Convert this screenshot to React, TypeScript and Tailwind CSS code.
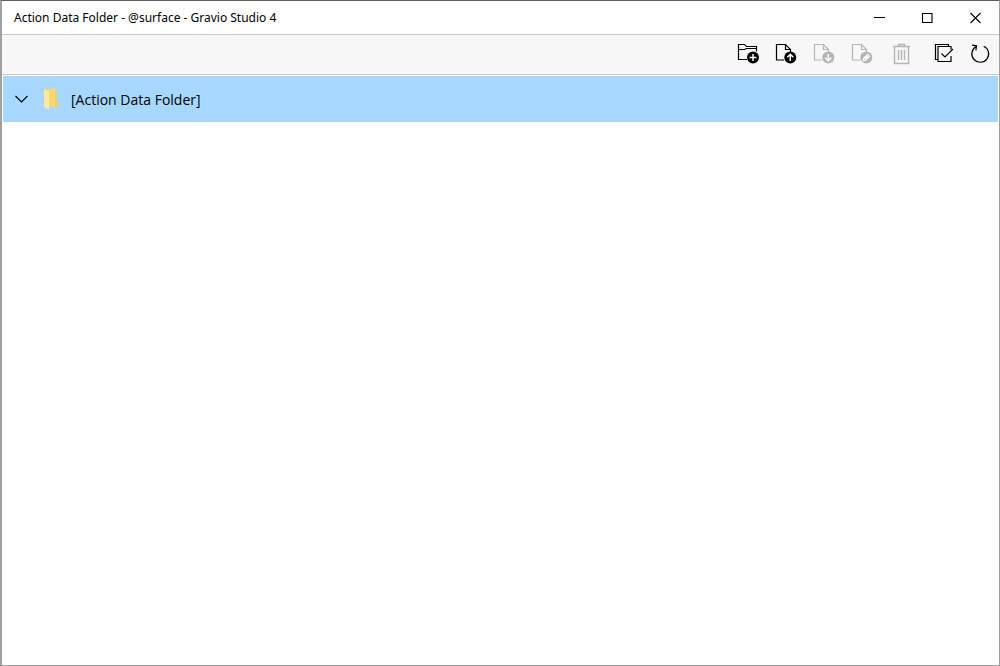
import type { ReactNode } from 'react';

function Icon({ children }: { children: ReactNode }) {
  return (
    <svg viewBox="0 0 24 24" className="block size-6" fill="none" stroke="currentColor" strokeWidth="1.2" aria-hidden="true">
      {children}
    </svg>
  );
}

function ToolButton({ label, disabled = false, children }: { label: string; disabled?: boolean; children: ReactNode }) {
  return (
    <button type="button" aria-label={label} disabled={disabled} className="text-black disabled:text-[#b5b5b5]">
      <Icon>{children}</Icon>
    </button>
  );
}

function DocumentShape() {
  return (
    <>
      <path d="M9 18H1.5V2.5h9L15.5 7.5V10" />
      <path d="M10.5 2.5v5h5" />
      <circle cx="15.3" cy="15.5" r="6" fill="currentColor" stroke="none" />
    </>
  );
}

function CaptionButton({ label, children }: { label: string; children: ReactNode }) {
  return (
    <button type="button" aria-label={label} className="flex w-12 items-center justify-center text-black">
      <svg viewBox="0 0 12 12" className="size-3" fill="none" stroke="currentColor" aria-hidden="true">
        {children}
      </svg>
    </button>
  );
}

export default function App() {
  return (
    <div className="flex min-h-screen flex-col border-t border-r border-b border-l-2 border-t-[#606060] border-r-[#a0a0a0] border-b-[#a0a0a0] border-l-[#a0a0a0] bg-white font-['Open_Sans','Noto_Sans',sans-serif] text-black">
      <header className="flex h-[34px] justify-between border-b border-[#c8c8c8] pl-3">
        <h1 className="self-center font-['Noto_Sans',sans-serif] text-[12px] leading-4">
          Action Data Folder - @surface - Gravio Studio 4
        </h1>
        <div className="flex">
          <CaptionButton label="Minimize">
            <path d="M1 5.5h11" />
          </CaptionButton>
          <CaptionButton label="Maximize">
            <path d="M1.500 1.500h9.500v9h-9.500z" strokeWidth="1.1" />
          </CaptionButton>
          <CaptionButton label="Close">
            <path d="M1.500 1l10 10M11.500 1l-10 10" strokeWidth="1.1" />
          </CaptionButton>
        </div>
      </header>

      <div role="toolbar" aria-label="Folder actions" className="flex h-10 justify-end border-b border-[#c8c8c8] bg-[#f7f7f7] pt-[7px] pr-[7px] pb-2">
        <div className="flex gap-3.5">
          <ToolButton label="New folder">
            <path d="M10 17.500H1.500v-15h6l2 2h10v5" />
            <path d="M1.500 7.500h6l2-1h10" />
            <circle cx="16" cy="15.500" r="6" fill="currentColor" stroke="none" />
            <path d="M16 12v7M12.500 15.500h7" stroke="#fff" strokeWidth="1.5" />
          </ToolButton>
          <ToolButton label="Upload file">
            <DocumentShape />
            <path d="M15.300 19v-6.500M12.300 15.300l3-3 3 3" stroke="#fff" strokeWidth="1.5" />
          </ToolButton>
          <ToolButton label="Download file" disabled>
            <DocumentShape />
            <path d="M15.300 12v6.500M12.300 15.700l3 3 3-3" stroke="#fff" strokeWidth="1.5" />
          </ToolButton>
          <ToolButton label="Edit file" disabled>
            <DocumentShape />
            <path d="M12.200 18.600l.5-2.400 4-3.800 1.800 1.800-4 3.900zM13.800 16.800l2.700-2.600" stroke="#fff" />
          </ToolButton>
          <ToolButton label="Delete" disabled>
            <path d="M4 4.500h17M9.500 4V2.500h6V4M5.500 5v16.500h14V5M9.500 8v10M12.500 8v10M15.500 8v10" strokeWidth="1.4" />
          </ToolButton>
        </div>
        <div className="ml-5 flex gap-[11px]">
          <ToolButton label="Select">
            <path d="M5 17.500H2.500v-15h13v2M18 14v5.500H5v-15h13v3M8.500 11.500l3.500 3.500 8-8" />
          </ToolButton>
          <ToolButton label="Refresh">
            <path d="M15.700 4.200A8.400 8.400 0 1 1 8 4.600M4 3.200l4.500 .6-.6 4.600" strokeWidth="1.2" />
          </ToolButton>
        </div>
      </div>

      <main className="flex-1 pt-px pr-px pl-px">
        <ul role="tree" aria-label="Folders">
          <li role="treeitem" aria-selected="true" aria-expanded="true" className="flex h-[46px] items-center bg-[#a6d8ff] pl-3">
            <button type="button" aria-label="Collapse folder">
              <svg viewBox="0 0 13 8" className="block h-2 w-[13px]" fill="none" stroke="currentColor" strokeWidth="1.1" aria-hidden="true">
                <path d="M.5 1l6 6 6-6" />
              </svg>
            </button>
            <svg viewBox="0 0 16 22" className="ml-[15px] h-[22px] w-4" aria-hidden="true">
              <path d="M1 1h13v12l1.500 1.500V19H2z" fill="#f8d775" />
              <path d="M12 1h2v12l1.500 1.500V19H12z" fill="#f3cf68" />
              <path d="M1 1l5 2.500V21.500L1 19z" fill="#ffe9a6" />
            </svg>
            <span className="ml-3 pt-0.5 text-[14px] leading-5">[Action Data Folder]</span>
          </li>
        </ul>
      </main>
    </div>
  );
}
